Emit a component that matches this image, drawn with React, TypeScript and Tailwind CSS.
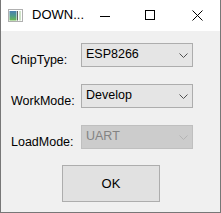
import React from "react";

const font = { fontFamily: '"Liberation Sans", Arial, sans-serif' };

function Chevron({ color }: { color: string }) {
  return (
    <svg width="9" height="5" viewBox="0 0 9 5" className="shrink-0">
      <path d="M0.5 0.5 L4.5 4.5 L8.5 0.5" fill="none" stroke={color} strokeWidth="1" />
    </svg>
  );
}

function Combo({ value, disabled }: { value: string; disabled?: boolean }) {
  return (
    <div
      className={
        disabled
          ? "w-[112px] h-6 border border-[#bfbfbf] bg-[#cccccc] flex items-center pl-[4px] pr-[4px] text-[#838383]"
          : "w-[112px] h-6 border border-[#adadad] bg-[#e5e5e5] flex items-center pl-[4px] pr-[4px] text-black"
      }
    >
      <span className="flex-1 text-[12.5px] leading-[16px] -mt-[2px]">{value}</span>
      <Chevron color={disabled ? "#b4b4b4" : "#505050"} />
    </div>
  );
}

function Row({ label, value, disabled }: { label: string; value: string; disabled?: boolean }) {
  return (
    <div className="flex items-start">
      <div className="w-[80px] pl-[10px] pt-[9px] text-[12.5px] leading-[16px] text-black">{label}</div>
      <Combo value={value} disabled={disabled} />
    </div>
  );
}

export default function App() {
  return (
    <div className="w-[221px] h-[213px] flex flex-col border-x border-b border-[#777777] bg-[#f0f0f0] select-none" style={font}>
      <div className="h-[31px] bg-white flex items-stretch shrink-0">
        <div className="flex items-center pl-[7px] flex-1 min-w-0">
          <svg width="15" height="13" viewBox="0 0 15 13" className="shrink-0 -mt-[1px]">
            <defs>
              <linearGradient id="g" x1="0" y1="0" x2="0" y2="1">
                <stop offset="0" stopColor="#4a7fb0" />
                <stop offset="0.5" stopColor="#4f9a8a" />
                <stop offset="1" stopColor="#6bb84f" />
              </linearGradient>
            </defs>
            <rect x="0.5" y="0.5" width="14" height="12" fill="#ffffff" stroke="#b0b0b0" />
            <rect x="1.5" y="2" width="7" height="9.5" fill="url(#g)" />
            <rect x="9" y="2" width="1" height="9.5" fill="#606060" />
            <rect x="11" y="2" width="2" height="9.5" fill="#cfe3c8" />
          </svg>
          <span className="ml-[9px] text-[13px] leading-[16px] text-black -mt-[1px]">DOWN...</span>
        </div>
        <div className="w-[46px] flex items-center justify-center">
          <div className="w-[10px] h-px bg-black mt-[1px]" />
        </div>
        <div className="w-[46px] flex items-center justify-center">
          <div className="w-[10px] h-[10px] border border-black -ml-[2px] -mt-[1px]" />
        </div>
        <div className="w-[46px] flex items-center justify-center">
          <svg width="11" height="11" viewBox="0 0 11 11" className="-mt-[1px]">
            <path d="M0.5 0.5 L10.5 10.5 M10.5 0.5 L0.5 10.5" stroke="#000" strokeWidth="1" />
          </svg>
        </div>
      </div>
      <div className="flex flex-col pt-[12px] gap-4">
        <Row label="ChipType:" value="ESP8266" />
        <Row label="WorkMode:" value="Develop" />
        <Row label="LoadMode:" value="UART" disabled />
      </div>
      <div className="pt-[15px] pl-[61px]">
        <div className="w-[98px] h-[37px] border border-[#adadad] bg-[#e1e1e1] flex items-center justify-center text-[13px] text-black">
          OK
        </div>
      </div>
    </div>
  );
}
